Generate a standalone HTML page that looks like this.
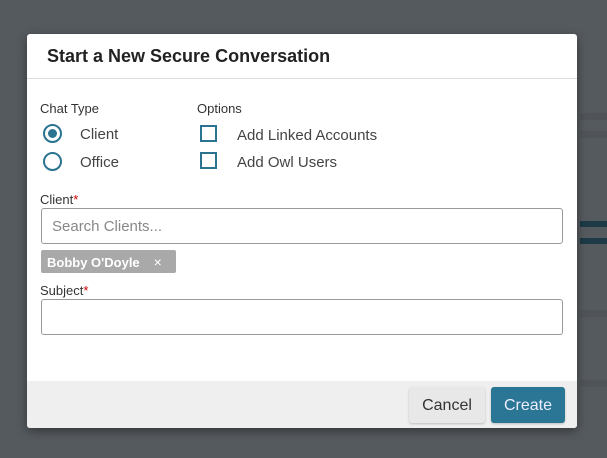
<!DOCTYPE html>
<html><head><style>
*{box-sizing:border-box;margin:0;padding:0}
body{width:607px;height:458px;background:#555a5e;font-family:"Liberation Sans",sans-serif;position:relative;overflow:hidden;color:#333}
.a{position:absolute}
.modal{left:27px;top:34px;width:550px;height:394px;background:#fff;border-radius:3px;box-shadow:0 3px 10px rgba(0,0,0,.4);overflow:hidden}
.lbl{font-size:13px;color:#333}
.opt{font-size:15px;color:#444}
.radio{width:19px;height:19px;border:2px solid #2a7391;border-radius:50%}
.chk{width:17px;height:17px;border:2px solid #2a7391}
.inp{border:1px solid #999;border-radius:3px;background:#fff}
</style></head><body>
<div class="a" style="left:580px;top:221px;width:27px;height:6px;background:#1d3a46"></div>
<div class="a" style="left:580px;top:238px;width:27px;height:6px;background:#1d3a46"></div>
<div class="a" style="left:580px;top:113px;width:27px;height:7px;background:#505458"></div>
<div class="a" style="left:580px;top:131px;width:27px;height:7px;background:#505458"></div>
<div class="a" style="left:580px;top:310px;width:27px;height:7px;background:#505458"></div>
<div class="a" style="left:580px;top:380px;width:27px;height:7px;background:#505458"></div>
<div class="a modal">
 <div class="a" style="left:20px;top:12px;font-size:18px;font-weight:bold;color:#222">Start a New Secure Conversation</div>
 <div class="a" style="left:0;top:44px;width:550px;height:1px;background:#ddd"></div>
 <div class="a lbl" style="left:13px;top:67px">Chat Type</div>
 <div class="a lbl" style="left:170px;top:67px">Options</div>
 <div class="a radio" style="left:16px;top:90px"><div style="width:9px;height:9px;border-radius:50%;background:#2a7391;margin:3px"></div></div>
 <div class="a opt" style="left:53px;top:92px">Client</div>
 <div class="a radio" style="left:16px;top:118px"></div>
 <div class="a opt" style="left:53px;top:120px">Office</div>
 <div class="a chk" style="left:173px;top:91px"></div>
 <div class="a opt" style="left:210px;top:93px">Add Linked Accounts</div>
 <div class="a chk" style="left:173px;top:118px"></div>
 <div class="a opt" style="left:210px;top:120px">Add Owl Users</div>
 <div class="a lbl" style="left:13px;top:158px">Client<span style="color:#c00">*</span></div>
 <div class="a inp" style="left:14px;top:174px;width:522px;height:36px"></div>
 <div class="a" style="left:25px;top:184px;font-size:15px;color:#888">Search Clients...</div>
 <div class="a" style="left:14px;top:216px;width:135px;height:23px;background:#a9a9a9;border-radius:2px;color:#fff;font-size:13px;font-weight:bold;padding:4px 0 0 6px">Bobby O'Doyle<span style="font-weight:normal;margin-left:14px;font-size:14px">×</span></div>
 <div class="a lbl" style="left:13px;top:249px">Subject<span style="color:#c00">*</span></div>
 <div class="a inp" style="left:14px;top:265px;width:522px;height:36px"></div>
 <div class="a" style="left:0;top:347px;width:550px;height:47px;background:#efefef"></div>
 <div class="a" style="left:382px;top:353px;width:76px;height:36px;background:#e8e8e8;border-radius:3px;box-shadow:0 1px 2px rgba(0,0,0,.2);font-size:16px;color:#333;text-align:center;line-height:38px">Cancel</div>
 <div class="a" style="left:464px;top:353px;width:74px;height:36px;background:#2a7694;border-radius:3px;box-shadow:0 1px 2px rgba(0,0,0,.2);font-size:16px;color:#eef;text-align:center;line-height:38px">Create</div>
</div>
</body></html>
